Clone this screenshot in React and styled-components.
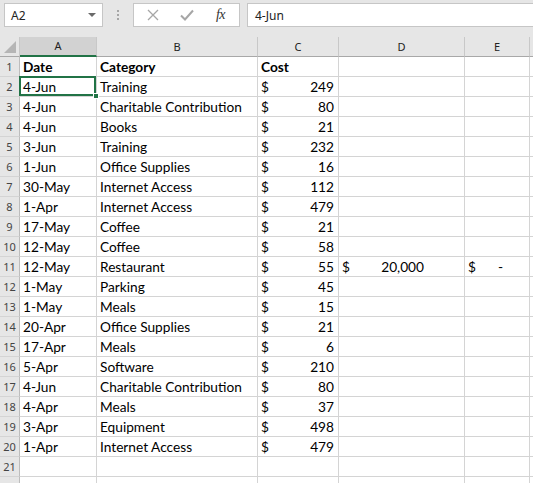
import React from "react";
import styled, { createGlobalStyle } from "styled-components";

const GlobalStyle = createGlobalStyle`
  html, body {
    margin: 0;
    padding: 0;
    background: #ffffff;
    overflow: hidden;
  }
  * {
    box-sizing: border-box;
  }
`;

const Page = styled.div`
  width: 533px;
  height: 483px;
  overflow: hidden;
  background: #ffffff;
`;

const Toolbar = styled.div`
  display: flex;
  align-items: center;
  height: 37px;
  padding: 2px 0 9px 4px;
  background: #e6e6e6;
`;

const NameBox = styled.div`
  display: flex;
  align-items: center;
  justify-content: space-between;
  width: 99px;
  height: 24px;
  padding: 0 6px 0 6px;
  background: #ffffff;
  border: 1px solid #c6c6c6;
  font-family: "Noto Sans", sans-serif;
  font-size: 12px;
  color: #222;
`;

const Caret = styled.span`
  width: 0;
  height: 0;
  border-left: 4px solid transparent;
  border-right: 4px solid transparent;
  border-top: 4px solid #6a6a6a;
`;

const Grip = styled.div`
  display: flex;
  flex-direction: column;
  gap: 2px;
  width: 30px;
  align-items: center;
  span {
    width: 2px;
    height: 2px;
    background: #a6a6a6;
  }
`;

const FuncBox = styled.div`
  display: flex;
  align-items: center;
  justify-content: space-between;
  width: 107px;
  height: 24px;
  padding: 0 14px 0 13px;
  background: #ffffff;
  border: 1px solid #c6c6c6;
`;

const Fx = styled.span`
  font-family: "Liberation Serif", serif;
  font-style: italic;
  font-size: 14px;
  color: #333;
  letter-spacing: -0.5px;
`;

const FormulaInput = styled.div`
  flex: 1;
  height: 24px;
  margin-left: 7px;
  display: flex;
  align-items: center;
  padding-left: 7px;
  background: #ffffff;
  border: 1px solid #c6c6c6;
  border-right: none;
  font-family: "Noto Sans", sans-serif;
  font-size: 12px;
  color: #222;
`;

const Sheet = styled.div`
  display: grid;
  grid-template-columns: 20px 77px 161px 81px 126px 65px 1fr;
  grid-auto-rows: 20px;
`;

const ColHead = styled.div`
  display: flex;
  align-items: center;
  justify-content: center;
  background: ${(p) => (p.$active ? "#d2d2d2" : "#e6e6e6")};
  border-right: 1px solid #c8c8c8;
  border-bottom: ${(p) => (p.$active ? "2px solid #217346" : "1px solid #a8a8a8")};
  font-family: "Noto Sans", sans-serif;
  font-size: 11px;
  color: #222;
  padding-bottom: 1px;
`;

const Corner = styled.div`
  position: relative;
  background: #e6e6e6;
  border-right: 1px solid #c8c8c8;
  border-bottom: 1px solid #a8a8a8;
  &::after {
    content: "";
    position: absolute;
    right: 3px;
    bottom: 3px;
    width: 0;
    height: 0;
    border-left: 12px solid transparent;
    border-bottom: 12px solid #b5b5b5;
  }
`;

const RowHead = styled.div`
  display: flex;
  align-items: center;
  justify-content: center;
  background: #e6e6e6;
  border-right: 1px solid #bdbdbd;
  border-bottom: 1px solid #d4d4d4;
  font-family: "Noto Sans", sans-serif;
  font-size: 11px;
  color: #444;
`;

const Cell = styled.div`
  position: relative;
  display: flex;
  align-items: center;
  justify-content: space-between;
  padding: 0 ${(p) => p.$padRight || 3}px 0 3px;
  border-right: 1px solid #d4d4d4;
  border-bottom: 1px solid #d4d4d4;
  font-family: Lato, "Noto Sans", sans-serif;
  font-size: 13.7px;
  font-weight: ${(p) => (p.$bold ? 700 : 400)};
  color: #000;
  white-space: nowrap;
  &::after {
    content: "";
    display: ${(p) => (p.$selected ? "block" : "none")};
    position: absolute;
    left: -1px;
    top: -1px;
    right: 0;
    bottom: 0;
    border: 2px solid #217346;
  }
`;

const Handle = styled.span`
  position: absolute;
  right: -3px;
  bottom: -3px;
  width: 6px;
  height: 6px;
  background: #217346;
  border: 1px solid #ffffff;
  z-index: 2;
`;

const rows = [
  ["4-Jun", "Training", "249"],
  ["4-Jun", "Charitable Contribution", "80"],
  ["4-Jun", "Books", "21"],
  ["3-Jun", "Training", "232"],
  ["1-Jun", "Office Supplies", "16"],
  ["30-May", "Internet Access", "112"],
  ["1-Apr", "Internet Access", "479"],
  ["17-May", "Coffee", "21"],
  ["12-May", "Coffee", "58"],
  ["12-May", "Restaurant", "55", "20,000", "-"],
  ["1-May", "Parking", "45"],
  ["1-May", "Meals", "15"],
  ["20-Apr", "Office Supplies", "21"],
  ["17-Apr", "Meals", "6"],
  ["5-Apr", "Software", "210"],
  ["4-Jun", "Charitable Contribution", "80"],
  ["4-Apr", "Meals", "37"],
  ["3-Apr", "Equipment", "498"],
  ["1-Apr", "Internet Access", "479"],
];

const Money = ({ value, padRight }) => (
  <Cell $padRight={padRight}>
    <span>$</span>
    <span>{value}</span>
  </Cell>
);

const CrossIcon = () => (
  <svg width="12" height="12" viewBox="0 0 12 12">
    <path d="M1 1 L11 11 M11 1 L1 11" stroke="#a6a6a6" strokeWidth="1.3" fill="none" />
  </svg>
);

const CheckIcon = () => (
  <svg width="14" height="12" viewBox="0 0 14 12">
    <path d="M1 6.5 L5 10.5 L13 1.5" stroke="#a6a6a6" strokeWidth="2" fill="none" />
  </svg>
);

export default function App() {
  const cols = ["A", "B", "C", "D", "E", ""];
  return (
    <Page>
      <GlobalStyle />
      <Toolbar>
        <NameBox>
          <span>A2</span>
          <Caret />
        </NameBox>
        <Grip>
          <span />
          <span />
          <span />
        </Grip>
        <FuncBox>
          <CrossIcon />
          <CheckIcon />
          <Fx>fx</Fx>
        </FuncBox>
        <FormulaInput>4-Jun</FormulaInput>
      </Toolbar>
      <Sheet>
        <Corner />
        {cols.map((c, i) => (
          <ColHead key={i} $active={c === "A"}>
            {c}
          </ColHead>
        ))}

        <RowHead>1</RowHead>
        <Cell $bold>Date</Cell>
        <Cell $bold>Category</Cell>
        <Cell $bold>Cost</Cell>
        <Cell />
        <Cell />
        <Cell />

        {rows.map((r, i) => (
          <React.Fragment key={i}>
            <RowHead>{i + 2}</RowHead>
            <Cell $selected={i === 0}>
              {r[0]}
              {i === 0 && <Handle />}
            </Cell>
            <Cell>{r[1]}</Cell>
            <Money value={r[2]} padRight={4} />
            {r[3] ? <Money value={r[3]} padRight={40} /> : <Cell />}
            {r[4] ? <Money value={r[4]} padRight={26} /> : <Cell />}
            <Cell />
          </React.Fragment>
        ))}

        {[21, 22].map((n) => (
          <React.Fragment key={n}>
            <RowHead>{n === 21 ? n : ""}</RowHead>
            <Cell />
            <Cell />
            <Cell />
            <Cell />
            <Cell />
            <Cell />
          </React.Fragment>
        ))}
      </Sheet>
    </Page>
  );
}
